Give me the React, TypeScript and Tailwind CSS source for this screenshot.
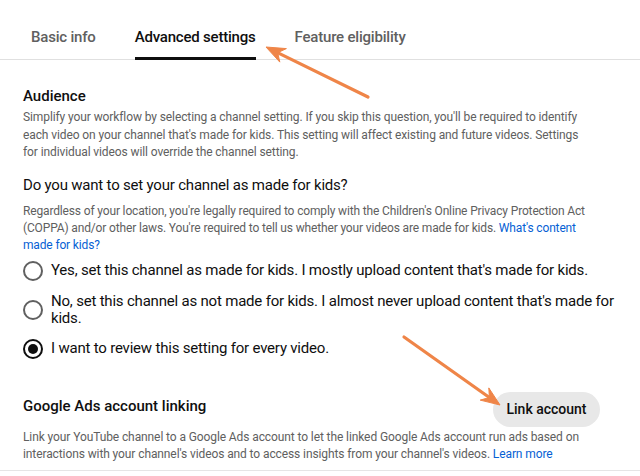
import React from "react";

function Arrow({ x1, y1, x2, y2 }: { x1: number; y1: number; x2: number; y2: number }) {
  const dx = x1 - x2;
  const dy = y1 - y2;
  const len = Math.hypot(dx, dy);
  const ux = dx / len;
  const uy = dy / len;
  const px = -uy;
  const py = ux;
  const L = 19;
  const W = 7.5;
  const N = 13;
  const bx = x2 + ux * L;
  const by = y2 + uy * L;
  const pts = [
    [x2, y2],
    [bx + px * W, by + py * W],
    [x2 + ux * N, y2 + uy * N],
    [bx - px * W, by - py * W],
  ]
    .map((p) => p.map((v) => v.toFixed(1)).join(","))
    .join(" ");
  return (
    <g>
      <line x1={x1} y1={y1} x2={x2 + ux * 10} y2={y2 + uy * 10} stroke="#ef8548" strokeWidth={3.2} strokeLinecap="round" />
      <polygon points={pts} fill="#ef8548" stroke="#ef8548" strokeWidth={1} strokeLinejoin="round" />
    </g>
  );
}

function Radio({ checked }: { checked?: boolean }) {
  return (
    <span
      className={
        "flex h-[20px] w-[20px] shrink-0 items-center justify-center rounded-full border-2 " +
        (checked ? "border-[#0f0f0f]" : "border-[#606060]")
      }
    >
      {checked && <span className="h-[10px] w-[10px] rounded-full bg-[#0f0f0f]" />}
    </span>
  );
}

export default function App() {
  return (
    <div
      className="relative h-[476px] w-[640px] overflow-hidden bg-white text-[#0f0f0f]"
      style={{ fontFamily: "Roboto, 'Liberation Sans', sans-serif" }}
    >
      <div className="border-b border-[#e5e5e5] pb-[7px]">
        {/* Tabs */}
        <div className="flex h-[60px] gap-[39px] border-b border-[#e0e0e0] pl-[31px] tracking-[-0.2px]">
          <div className="flex h-[60px] items-center pt-[14px] text-[15px] font-medium text-[#606060]">
            Basic info
          </div>
          <div className="flex h-[60px] items-center border-b-[3px] border-[#0f0f0f] pt-[17px] text-[15px] font-medium text-[#0f0f0f]">
            Advanced settings
          </div>
          <div className="flex h-[60px] items-center pt-[14px] text-[15px] font-medium text-[#606060]">
            Feature eligibility
          </div>
        </div>

        <div className="pl-[23px] pr-[10px]">
          <div className="mt-[26px] text-[15px] font-medium leading-[20px]">Audience</div>
          <p className="mt-[3px] whitespace-nowrap text-[12px] leading-[17.5px] tracking-[-0.1px] text-[#606060]">
            Simplify your workflow by selecting a channel setting. If you skip this question, you'll be required to identify
            <br />
            each video on your channel that's made for kids. This setting will affect existing and future videos. Settings
            <br />
            for individual videos will override the channel setting.
          </p>

          <div className="mt-[12px] text-[15px] leading-[22px] tracking-[-0.2px]">
            Do you want to set your channel as made for kids?
          </div>
          <p className="mt-[7px] whitespace-nowrap text-[12px] leading-[17px] tracking-[-0.15px] text-[#606060]">
            Regardless of your location, you're legally required to comply with the Children's Online Privacy Protection Act
            <br />
            (COPPA) and/or other laws. You're required to tell us whether your videos are made for kids.{" "}
            <span className="text-[#065fd4]">What's content</span>
            <br />
            <span className="text-[#065fd4]">made for kids?</span>
          </p>

          <div className="mt-[7px] flex items-center gap-[8px] tracking-[-0.2px]">
            <Radio />
            <span className="text-[15px] leading-[17px]">
              Yes, set this channel as made for kids. I mostly upload content that's made for kids.
            </span>
          </div>
          <div className="mt-[12px] flex items-center gap-[8px] tracking-[-0.2px]">
            <Radio />
            <span className="whitespace-nowrap text-[15px] leading-[17px]">
              No, set this channel as not made for kids. I almost never upload content that's made for
              <br />
              kids.
            </span>
          </div>
          <div className="mt-[12px] flex items-center gap-[8px] tracking-[-0.2px]">
            <Radio checked />
            <span className="text-[15px] leading-[17px]">I want to review this setting for every video.</span>
          </div>

          <div className="mt-[33px] flex items-center justify-between pr-[30px]">
            <div className="mb-[7px] text-[15px] font-medium leading-[20px]">Google Ads account linking</div>
            <button className="h-[35px] w-[107px] rounded-full bg-[#e8e8e8] text-[14px] font-medium text-[#0f0f0f]">
              Link account
            </button>
          </div>
          <p className="mt-[2px] whitespace-nowrap text-[12px] leading-[17px] tracking-[-0.1px] text-[#606060]">
            Link your YouTube channel to a Google Ads account to let the linked Google Ads account run ads based on
            <br />
            interactions with your channel's videos and to access insights from your channel's videos.{" "}
            <span className="text-[#065fd4]">Learn more</span>
          </p>
        </div>
      </div>

      <svg className="pointer-events-none absolute left-0 top-0" width={640} height={476} viewBox="0 0 640 476">
        <Arrow x1={368} y1={97} x2={266} y2={47} />
        <Arrow x1={404} y1={337} x2={500} y2={405} />
      </svg>
    </div>
  );
}
